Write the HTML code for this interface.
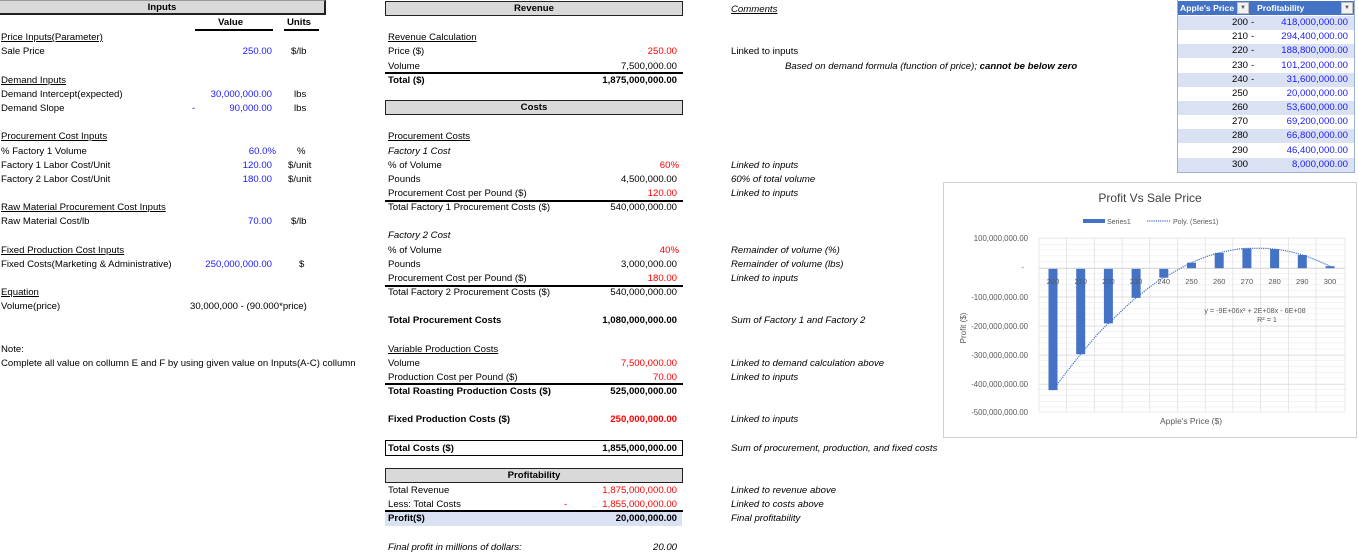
<!DOCTYPE html>
<html><head><meta charset="utf-8"><style>
*{margin:0;padding:0;box-sizing:border-box}
body{width:1358px;height:558px;background:#fff;position:relative;overflow:hidden;font-family:"Liberation Sans",Arial,sans-serif;font-size:9.6px;color:#000}
.t{position:absolute;height:14px;line-height:15px;white-space:nowrap}
.u{text-decoration:underline}
.b{font-weight:bold}
.i{font-style:italic}
.bl{color:#1a1aff}
.rd{color:#ff0000}
.rv{position:absolute;height:14px;line-height:15px;white-space:nowrap;text-align:right}
.hd{position:absolute;background:#d9d9d9;font-weight:bold;text-align:center;line-height:13px;height:15px}
.ln{position:absolute;height:2px;background:#000}
.tb{position:absolute;left:1178px;width:176px;height:14px;line-height:14px;color:#000}
.tb.a{background:#d9e1f2}
.tb span{position:absolute}
</style></head><body>

<div class="hd" style="left:0;top:0;width:326px;border-top:1px solid #999;border-right:2px solid #222;border-bottom:2px solid #222">Inputs</div>
<div class="hd" style="left:385px;top:1px;width:298px;border:1.5px solid #222">Revenue</div>
<div class="hd" style="left:385px;top:100px;width:298px;border:1.5px solid #222">Costs</div>
<div class="hd" style="left:385px;top:468px;width:298px;border:1.5px solid #222">Profitability</div>
<div style="position:absolute;left:385px;top:440px;width:298px;height:16px;border:1.5px solid #000"></div>
<div style="position:absolute;left:385px;top:511px;width:297px;height:15px;background:#d9e1f2"></div>

<div class="t i u" style="left:731px;top:2px">Comments</div>

<div class="t b" style="left:218px;top:15px">Value</div>
<div class="ln" style="left:195px;top:29px;width:78px"></div>
<div class="t b" style="left:287px;top:15px">Units</div>
<div class="ln" style="left:284px;top:29px;width:35px"></div>

<div class="t u" style="left:1px;top:30px">Price Inputs(Parameter)</div>
<div class="t" style="left:1px;top:44px">Sale Price</div>
<div class="rv bl" style="right:1086px;top:44px">250.00</div>
<div class="t" style="left:291px;top:44px">$/lb</div>

<div class="t u" style="left:1px;top:73px">Demand Inputs</div>
<div class="t" style="left:1px;top:87px">Demand Intercept(expected)</div>
<div class="rv bl" style="right:1086px;top:87px">30,000,000.00</div>
<div class="t" style="left:294px;top:87px">lbs</div>
<div class="t" style="left:1px;top:101px">Demand Slope</div>
<div class="t bl" style="left:192px;top:101px">-</div>
<div class="rv bl" style="right:1086px;top:101px">90,000.00</div>
<div class="t" style="left:294px;top:101px">lbs</div>

<div class="t u" style="left:1px;top:129px">Procurement Cost Inputs</div>
<div class="t" style="left:1px;top:144px">% Factory 1 Volume</div>
<div class="rv bl" style="right:1082px;top:144px">60.0%</div>
<div class="t" style="left:297px;top:144px">%</div>
<div class="t" style="left:1px;top:158px">Factory 1 Labor Cost/Unit</div>
<div class="rv bl" style="right:1086px;top:158px">120.00</div>
<div class="t" style="left:288px;top:158px">$/unit</div>
<div class="t" style="left:1px;top:172px">Factory 2 Labor Cost/Unit</div>
<div class="rv bl" style="right:1086px;top:172px">180.00</div>
<div class="t" style="left:288px;top:172px">$/unit</div>

<div class="t u" style="left:1px;top:200px">Raw Material Procurement Cost Inputs</div>
<div class="t" style="left:1px;top:214px">Raw Material Cost/lb</div>
<div class="rv bl" style="right:1086px;top:214px">70.00</div>
<div class="t" style="left:291px;top:214px">$/lb</div>

<div class="t u" style="left:1px;top:243px">Fixed Production Cost Inputs</div>
<div class="t" style="left:1px;top:257px">Fixed Costs(Marketing &amp; Administrative)</div>
<div class="rv bl" style="right:1086px;top:257px">250,000,000.00</div>
<div class="t" style="left:299px;top:257px">$</div>

<div class="t u" style="left:1px;top:285px">Equation</div>
<div class="t" style="left:1px;top:299px">Volume(price)</div>
<div class="t" style="left:190px;top:299px">30,000,000 - (90.000*price)</div>

<div class="t" style="left:1px;top:342px">Note:</div>
<div class="t" style="left:1px;top:356px">Complete all value on collumn E and F by using given value on Inputs(A-C) collumn</div>

<div class="t u" style="left:388px;top:30px">Revenue Calculation</div>
<div class="t" style="left:388px;top:44px">Price ($)</div>
<div class="rv rd" style="right:681px;top:44px">250.00</div>
<div class="t" style="left:731px;top:44px">Linked to inputs</div>
<div class="t" style="left:388px;top:59px">Volume</div>
<div class="rv" style="right:681px;top:59px">7,500,000.00</div>
<div class="t i" style="left:785px;top:59px">Based on demand formula (function of price); <b>cannot be below zero</b></div>
<div class="ln" style="left:385px;top:72px;width:298px;height:1.5px"></div>
<div class="t b" style="left:388px;top:73px">Total ($)</div>
<div class="rv b" style="right:681px;top:73px">1,875,000,000.00</div>

<div class="t u" style="left:388px;top:129px">Procurement Costs</div>
<div class="t i" style="left:388px;top:144px">Factory 1 Cost</div>
<div class="t" style="left:388px;top:158px">% of Volume</div>
<div class="rv rd" style="right:679px;top:158px">60%</div>
<div class="t i" style="left:731px;top:158px">Linked to inputs</div>
<div class="t" style="left:388px;top:172px">Pounds</div>
<div class="rv" style="right:681px;top:172px">4,500,000.00</div>
<div class="t i" style="left:731px;top:172px">60% of total volume</div>
<div class="t" style="left:388px;top:186px">Procurement Cost per Pound ($)</div>
<div class="rv rd" style="right:681px;top:186px">120.00</div>
<div class="t i" style="left:731px;top:186px">Linked to inputs</div>
<div class="ln" style="left:385px;top:200px;width:298px;height:1.5px"></div>
<div class="t" style="left:388px;top:200px">Total Factory 1 Procurement Costs ($)</div>
<div class="rv" style="right:681px;top:200px">540,000,000.00</div>

<div class="t i" style="left:388px;top:228px">Factory 2 Cost</div>
<div class="t" style="left:388px;top:243px">% of Volume</div>
<div class="rv rd" style="right:679px;top:243px">40%</div>
<div class="t i" style="left:731px;top:243px">Remainder of volume (%)</div>
<div class="t" style="left:388px;top:257px">Pounds</div>
<div class="rv" style="right:681px;top:257px">3,000,000.00</div>
<div class="t i" style="left:731px;top:257px">Remainder of volume (lbs)</div>
<div class="t" style="left:388px;top:271px">Procurement Cost per Pound ($)</div>
<div class="rv rd" style="right:681px;top:271px">180.00</div>
<div class="t i" style="left:731px;top:271px">Linked to inputs</div>
<div class="ln" style="left:385px;top:285px;width:298px;height:1.5px"></div>
<div class="t" style="left:388px;top:285px">Total Factory 2 Procurement Costs ($)</div>
<div class="rv" style="right:681px;top:285px">540,000,000.00</div>

<div class="t b" style="left:388px;top:313px">Total Procurement Costs</div>
<div class="rv b" style="right:681px;top:313px">1,080,000,000.00</div>
<div class="t i" style="left:731px;top:313px">Sum of Factory 1 and Factory 2</div>

<div class="t u" style="left:388px;top:342px">Variable Production Costs</div>
<div class="t" style="left:388px;top:356px">Volume</div>
<div class="rv rd" style="right:681px;top:356px">7,500,000.00</div>
<div class="t i" style="left:731px;top:356px">Linked to demand calculation above</div>
<div class="t" style="left:388px;top:370px">Production Cost per Pound ($)</div>
<div class="rv rd" style="right:681px;top:370px">70.00</div>
<div class="t i" style="left:731px;top:370px">Linked to inputs</div>
<div class="ln" style="left:385px;top:383px;width:298px;height:1.5px"></div>
<div class="t b" style="left:388px;top:384px">Total Roasting Production Costs ($)</div>
<div class="rv b" style="right:681px;top:384px">525,000,000.00</div>

<div class="t b" style="left:388px;top:412px">Fixed Production Costs ($)</div>
<div class="rv b rd" style="right:681px;top:412px">250,000,000.00</div>
<div class="t i" style="left:731px;top:412px">Linked to inputs</div>

<div class="t b" style="left:388px;top:441px">Total Costs ($)</div>
<div class="rv b" style="right:681px;top:441px">1,855,000,000.00</div>
<div class="t i" style="left:731px;top:441px">Sum of procurement, production, and fixed costs</div>

<div class="t" style="left:388px;top:483px">Total Revenue</div>
<div class="rv rd" style="right:681px;top:483px">1,875,000,000.00</div>
<div class="t i" style="left:731px;top:483px">Linked to revenue above</div>
<div class="t" style="left:388px;top:497px">Less: Total Costs</div>
<div class="t rd" style="left:564px;top:497px">-</div>
<div class="rv rd" style="right:681px;top:497px">1,855,000,000.00</div>
<div class="t i" style="left:731px;top:497px">Linked to costs above</div>
<div class="ln" style="left:385px;top:510px;width:298px;height:1.5px"></div>
<div class="t b" style="left:388px;top:511px">Profit($)</div>
<div class="rv b" style="right:681px;top:511px">20,000,000.00</div>
<div class="t i" style="left:731px;top:511px">Final profitability</div>

<div class="t i" style="left:388px;top:540px">Final profit in millions of dollars:</div>
<div class="rv i" style="right:681px;top:540px">20.00</div>

<div class="tb" style="top:1px;background:#4472c4;color:#fff;font-weight:bold;font-size:8.6px">
 <span style="left:2px">Apple's Price</span>
 <span style="left:59px;top:1px;width:12px;height:12px;background:#f2f2f2;border:1px solid #bbb;color:#555;font-size:6px;line-height:10px;text-align:center">▼</span>
 <span style="left:79px">Profitability</span>
 <span style="left:163px;top:1px;width:12px;height:12px;background:#f2f2f2;border:1px solid #bbb;color:#555;font-size:6px;line-height:10px;text-align:center">▼</span>
</div>
<div class="tb a" style="top:16px"><span style="right:106px">200</span><span style="left:73px">-</span><span class="bl" style="right:6px">418,000,000.00</span></div>
<div class="tb" style="top:30px"><span style="right:106px">210</span><span style="left:73px">-</span><span class="bl" style="right:6px">294,400,000.00</span></div>
<div class="tb a" style="top:44px"><span style="right:106px">220</span><span style="left:73px">-</span><span class="bl" style="right:6px">188,800,000.00</span></div>
<div class="tb" style="top:59px"><span style="right:106px">230</span><span style="left:73px">-</span><span class="bl" style="right:6px">101,200,000.00</span></div>
<div class="tb a" style="top:73px"><span style="right:106px">240</span><span style="left:73px">-</span><span class="bl" style="right:6px">31,600,000.00</span></div>
<div class="tb" style="top:87px"><span style="right:106px">250</span><span class="bl" style="right:6px">20,000,000.00</span></div>
<div class="tb a" style="top:101px"><span style="right:106px">260</span><span class="bl" style="right:6px">53,600,000.00</span></div>
<div class="tb" style="top:115px"><span style="right:106px">270</span><span class="bl" style="right:6px">69,200,000.00</span></div>
<div class="tb a" style="top:129px"><span style="right:106px">280</span><span class="bl" style="right:6px">66,800,000.00</span></div>
<div class="tb" style="top:144px"><span style="right:106px">290</span><span class="bl" style="right:6px">46,400,000.00</span></div>
<div class="tb a" style="top:158px"><span style="right:106px">300</span><span class="bl" style="right:6px">8,000,000.00</span></div>
<div style="position:absolute;left:1177px;top:0;width:178px;height:173px;border:1px solid #9bb0d8;border-top:none"></div>

<svg style="position:absolute;left:943px;top:182px" width="414" height="256" viewBox="943 182 414 256" font-family="Liberation Sans, Arial, sans-serif">
<defs>
<pattern id="hg" patternUnits="userSpaceOnUse" x="1039" y="238" width="306" height="5.82"><line x1="0" y1="0.3" x2="306" y2="0.3" stroke="#ececec" stroke-width="0.6"/></pattern>
</defs>
<rect x="943.5" y="182.5" width="413" height="255" fill="#fff" stroke="#d0d0d0"/>
<text x="1150" y="202" font-size="12" text-anchor="middle" fill="#404040">Profit Vs Sale Price</text>
<rect x="1083" y="219" width="22" height="4" fill="#4472c4"/>
<text x="1107" y="224" font-size="7" fill="#595959">Series1</text>
<line x1="1147" y1="221" x2="1171" y2="221" stroke="#4472c4" stroke-width="1.2" stroke-dasharray="1.2,1"/>
<text x="1173" y="224" font-size="7" fill="#595959">Poly. (Series1)</text>
<rect x="1039" y="238" width="306" height="174" fill="url(#hg)"/>
<g stroke="#d9d9d9" stroke-width="0.6">
<line x1="1039" y1="238" x2="1345" y2="238"/><line x1="1039" y1="297.1" x2="1345" y2="297.1"/><line x1="1039" y1="326.2" x2="1345" y2="326.2"/><line x1="1039" y1="355.3" x2="1345" y2="355.3"/><line x1="1039" y1="384.4" x2="1345" y2="384.4"/><line x1="1039" y1="412" x2="1345" y2="412"/>
<line x1="1039" y1="238" x2="1039" y2="412"/><line x1="1066.7" y1="238" x2="1066.7" y2="412"/><line x1="1094.4" y1="238" x2="1094.4" y2="412"/><line x1="1122.1" y1="238" x2="1122.1" y2="412"/><line x1="1149.8" y1="238" x2="1149.8" y2="412"/><line x1="1177.5" y1="238" x2="1177.5" y2="412"/><line x1="1205.2" y1="238" x2="1205.2" y2="412"/><line x1="1232.9" y1="238" x2="1232.9" y2="412"/><line x1="1260.6" y1="238" x2="1260.6" y2="412"/><line x1="1288.3" y1="238" x2="1288.3" y2="412"/><line x1="1316" y1="238" x2="1316" y2="412"/><line x1="1345" y1="238" x2="1345" y2="412"/>
</g>
<g fill="#4472c4">
<rect x="1048.5" y="268.5" width="9" height="121.6"/>
<rect x="1076.2" y="268.5" width="9" height="85.7"/>
<rect x="1103.9" y="268.5" width="9" height="54.9"/>
<rect x="1131.6" y="268.5" width="9" height="29.4"/>
<rect x="1159.3" y="268.5" width="9" height="9.2"/>
<rect x="1187" y="262.7" width="9" height="5.8"/>
<rect x="1214.7" y="252.9" width="9" height="15.6"/>
<rect x="1242.4" y="248.4" width="9" height="20.1"/>
<rect x="1270.1" y="249.1" width="9" height="19.4"/>
<rect x="1297.8" y="255" width="9" height="13.5"/>
<rect x="1325.5" y="266.2" width="9" height="2.3"/>
</g>
<line x1="1039" y1="268.5" x2="1345" y2="268.5" stroke="#d0d0d0" stroke-width="0.8"/>
<path d="M1053,390.1 C1062,378 1071,366 1080.7,354.2 S1099,332 1108.4,323.4 S1127,305 1136.1,297.9 S1154,283 1163.8,277.7 S1182,267 1191.5,262.7 S1210,255 1219.2,252.9 S1238,248.5 1246.9,248.4 S1265,248 1274.6,249.1 S1293,252 1302.3,255 S1321,262 1330,266.2" fill="none" stroke="#4472c4" stroke-width="1.2" stroke-dasharray="1.2,1"/>
<g font-size="7.8" fill="#595959" text-anchor="end">
<text x="1028" y="241">100,000,000.00</text>
<text x="1024" y="270">-</text>
<text x="1028" y="300">-100,000,000.00</text>
<text x="1028" y="329">-200,000,000.00</text>
<text x="1028" y="358">-300,000,000.00</text>
<text x="1028" y="387">-400,000,000.00</text>
<text x="1028" y="415">-500,000,000.00</text>
</g>
<g font-size="7.5" fill="#595959" text-anchor="middle">
<text x="1053" y="284">200</text><text x="1080.7" y="284">210</text><text x="1108.4" y="284">220</text><text x="1136.1" y="284">230</text><text x="1163.8" y="284">240</text><text x="1191.5" y="284">250</text><text x="1219.2" y="284">260</text><text x="1246.9" y="284">270</text><text x="1274.6" y="284">280</text><text x="1302.3" y="284">290</text><text x="1330" y="284">300</text>
</g>
<text x="1255" y="313" font-size="7.2" fill="#595959" text-anchor="middle">y = -9E+06x² + 2E+08x - 6E+08</text>
<text x="1267" y="322" font-size="7.2" fill="#595959" text-anchor="middle">R² = 1</text>
<text x="1191" y="424" font-size="8.5" fill="#595959" text-anchor="middle">Apple's Price ($)</text>
<text x="0" y="0" font-size="8" fill="#595959" text-anchor="middle" transform="translate(966,328) rotate(-90)">Profit ($)</text>
</svg>
</body></html>
